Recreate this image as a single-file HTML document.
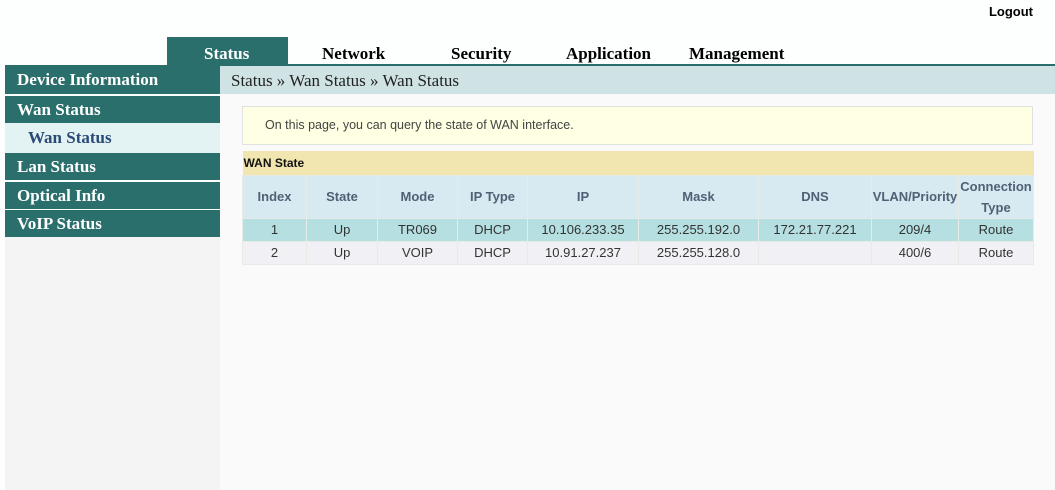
<!DOCTYPE html>
<html><head><style>
body{margin:0;width:1055px;height:490px;background:#fdfefe;position:relative;overflow:hidden;font-family:"Liberation Serif",serif}
.a{position:absolute}
.nav{top:44px;font-weight:bold;font-size:17px;color:#000}
.side{left:5px;width:215px;background:#2a6f6c;color:#fff;font-weight:bold;font-size:17px;padding-left:12px;box-sizing:border-box}
table{border-collapse:collapse;font-family:"Liberation Sans",sans-serif;font-size:13px;color:#333;text-align:center}
td{border:1px solid #e6ebe6;padding:0}
</style></head><body>
<div class="a" style="right:22px;top:4px;font-family:'Liberation Sans',sans-serif;font-weight:bold;font-size:13px">Logout</div>
<div class="a" style="left:167px;top:37px;width:121px;height:29px;background:#2a6f6c"></div>
<div class="a nav" style="left:204px;color:#fff">Status</div>
<div class="a nav" style="left:322px">Network</div>
<div class="a nav" style="left:451px">Security</div>
<div class="a nav" style="left:566px">Application</div>
<div class="a nav" style="left:689px">Management</div>
<div class="a" style="left:220px;top:64px;width:835px;height:2px;background:#2a6f6c"></div>
<div class="a" style="left:220px;top:66px;width:835px;height:28px;background:#cfe3e4"></div>
<div class="a" style="left:231px;top:71px;font-size:17px;color:#222">Status » Wan Status » Wan Status</div>
<div class="a" style="left:5px;top:237px;width:215px;height:253px;background:#f4f4f4"></div>
<div class="a" style="left:220px;top:94px;width:835px;height:396px;background:#fafafa"></div>
<div class="a side" style="top:65px;height:29px;line-height:29px">Device Information</div>
<div class="a side" style="top:96px;height:27px;line-height:27px">Wan Status</div>
<div class="a side" style="top:123px;height:30px;line-height:30px;background:#e3f2f2;color:#2a4a78;padding-left:23px">Wan Status</div>
<div class="a side" style="top:153px;height:27px;line-height:27px">Lan Status</div>
<div class="a side" style="top:182px;height:27px;line-height:27px">Optical Info</div>
<div class="a side" style="top:210px;height:27px;line-height:27px">VoIP Status</div>
<div class="a" style="left:242px;top:106px;height:37px;background:#ffffe3;border:1px solid #dfe3df;width:789px"></div>
<div class="a" style="left:265px;top:106px;font-family:'Liberation Sans',sans-serif;font-size:12.5px;color:#444;line-height:39px">On this page, you can query the state of WAN interface.</div>
<table class="a" style="left:242px;top:151px;width:792px">
<tr style="height:24px;background:#f1e6b0"><td colspan="9" style="text-align:left;font-weight:bold;color:#111;font-size:12px;padding-left:1px;border:none">WAN State</td></tr>
<tr style="height:43px;background:#d7eaf1;font-weight:bold;color:#4e6176"><td style="width:63px">Index</td><td style="width:70px">State</td><td style="width:79px">Mode</td><td style="width:69px">IP Type</td><td style="width:110px">IP</td><td style="width:119px">Mask</td><td style="width:112px">DNS</td><td style="width:86px">VLAN/Priority</td><td style="line-height:21px">Connection<br>Type</td></tr>
<tr style="height:23px;background:#b5dfe0"><td>1</td><td>Up</td><td>TR069</td><td>DHCP</td><td>10.106.233.35</td><td>255.255.192.0</td><td>172.21.77.221</td><td>209/4</td><td>Route</td></tr>
<tr style="height:23px;background:#f1f1f5"><td>2</td><td>Up</td><td>VOIP</td><td>DHCP</td><td>10.91.27.237</td><td>255.255.128.0</td><td></td><td>400/6</td><td>Route</td></tr>
</table>
</body></html>
